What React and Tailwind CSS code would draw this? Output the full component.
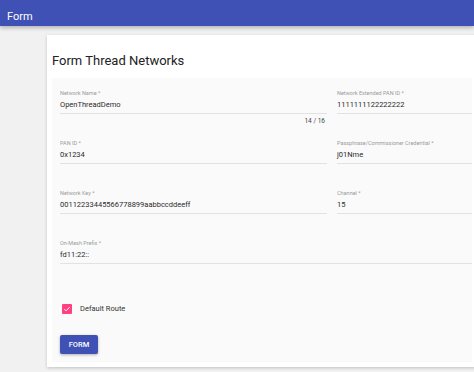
import React from 'react';

const font = { fontFamily: 'Roboto, "Liberation Sans", sans-serif' };

function Field({ label, value, hint, className = '' }) {
  return (
    <div className={`h-[50px] pt-[6px] ${className}`}>
      <div className="border-b border-[#e2e2e2] pb-[2px]">
        <div className="h-[8px] text-[5.5px] leading-[8px] text-[#9a9a9a]">{label}</div>
        <div className="mt-[2px] h-[12px] text-[7.5px] leading-[12px] text-[#2b2b2b]">{value}</div>
      </div>
      {hint && (
        <div className="mt-[3px] h-[8px] pr-[2px] text-right text-[6.5px] leading-[8px] text-[#444]">{hint}</div>
      )}
    </div>
  );
}

export default function App() {
  return (
    <div className="h-[372px] w-[474px] overflow-hidden bg-[#f1f1f1]" style={font}>
      <div className="relative z-10 h-[26px] bg-[#3f51b5] pl-[7px] pt-[3px] shadow-[0_2px_4px_rgba(0,0,0,0.25)]">
        <span className="text-[11px] leading-[13px] text-white">Form</span>
      </div>

      <div className="ml-[47px] mt-[9px] w-[430px] bg-white px-[5px] pb-[5px] pt-[18px] shadow-[0_1px_3px_rgba(0,0,0,0.2)]">
        <h1 className="h-[16px] text-[13px] leading-[16px] text-[#222]">Form Thread Networks</h1>

        <div className="mt-[9px] w-[420px] bg-[#fafafa] pb-[8px] pl-[8px] pt-[5px]">
          <div className="flex gap-[10px]">
            <Field className="w-[267px]" label="Network Name *" value="OpenThreadDemo" hint="14 / 16" />
            <Field className="flex-1" label="Network Extended PAN ID *" value="1111111122222222" />
          </div>
          <div className="flex gap-[10px]">
            <Field className="w-[267px]" label="PAN ID *" value="0x1234" />
            <Field className="flex-1" label="Passphrase/Commissioner Credential *" value="j01Nme" />
          </div>
          <div className="flex gap-[10px]">
            <Field className="w-[267px]" label="Network Key *" value="00112233445566778899aabbccddeeff" />
            <Field className="flex-1" label="Channel *" value="15" />
          </div>
          <Field label="On-Mesh Prefix *" value="fd11:22::" />

          <div className="mt-[21px] flex h-[10px] items-center pl-[2px]">
            <span className="flex h-[10px] w-[10px] items-center justify-center rounded-[1px] bg-[#ff4081]">
              <svg width="8" height="8" viewBox="0 0 24 24" fill="none" stroke="white" strokeWidth="3">
                <path d="M4 12.5l5 5L20 6.5" />
              </svg>
            </span>
            <span className="ml-[8px] text-[7.5px] leading-[10px] text-[#333]">Default Route</span>
          </div>

          <button className="mt-[21px] flex h-[19px] w-[38px] items-center justify-center rounded-[2px] bg-[#3f51b5] text-[7.5px] font-medium text-white shadow-[0_1px_3px_rgba(0,0,0,0.3)]">
            FORM
          </button>
        </div>
      </div>
    </div>
  );
}
